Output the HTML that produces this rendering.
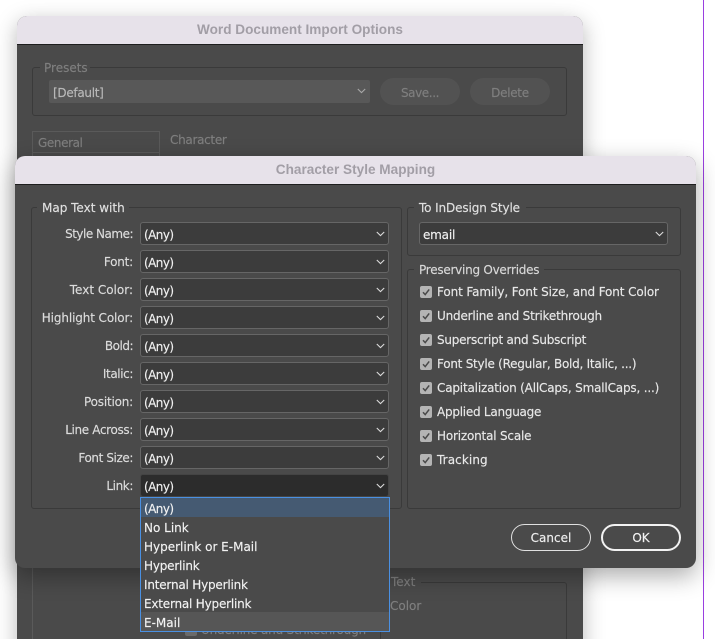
<!DOCTYPE html>
<html><head><meta charset="utf-8">
<style>
html,body{margin:0;padding:0;background:#fff}
#p{position:relative;width:715px;height:639px;overflow:hidden;background:#fff;font-family:"DejaVu Sans","Liberation Sans",sans-serif;font-size:12px;color:#e4e4e4}
#p div,#p span.a{position:absolute;box-sizing:border-box}
.t{white-space:nowrap;line-height:16px;height:16px;-webkit-text-stroke:.15px currentColor}
.dim{color:#7f7f7f}
.title{font-family:"Liberation Sans",sans-serif;font-weight:bold;font-size:13.6px;color:#a29ea6;text-align:center;line-height:28px}
.bar{background:#e7e2ea;border-bottom:1px solid #1e1e1e}
.fs{border:1px solid #3a3a3a;border-radius:3px}
.dd{background:#3c3c3c;border:1px solid #666;border-radius:3px;left:140px;width:249px;height:23px}
.lab{right:582px;text-align:right;color:#dcdcdc}
.v{left:144px;color:#f0f0f0;letter-spacing:-.55px}
.cb{left:420px;width:12px;height:12px;background:#b4b4b4;border-radius:2px}
.cbl{left:437px;color:#e8e8e8}
svg{position:absolute;overflow:visible}
.pi{left:144px;color:#f2f2f2}
</style></head><body>
<div id="p">
<!-- purple line -->
<div style="left:703px;top:0;width:1px;height:639px;background:#9a3fe0"></div>

<!-- back dialog -->
<div style="left:17px;top:16px;width:566px;height:640px;background:#4a4a4a;border-radius:10px 10px 0 0;box-shadow:0 6px 22px rgba(0,0,0,.28);overflow:hidden"></div>
<div class="bar" style="left:17px;top:16px;width:566px;height:29px;border-radius:10px 10px 0 0"></div>
<div class="title" style="left:17px;top:16px;width:566px">Word Document Import Options</div>
<div class="fs" style="left:32px;top:67px;width:535px;height:49px"></div>
<div style="left:40px;top:62px;width:50px;height:12px;background:#4a4a4a"></div>
<div class="t dim" style="left:44px;top:60px">Presets</div>
<div style="left:49px;top:80px;width:321px;height:23px;background:#585858;border-radius:2px"></div>
<div class="t" style="left:53px;top:85px;color:#b9b9b9;letter-spacing:-.3px">[Default]</div>
<svg style="left:357px;top:88px" width="9" height="6"><path d="M.8 1 4.5 4.6 8.2 1" fill="none" stroke="#a8a8a8" stroke-width="1.1"/></svg>
<div style="left:380px;top:78px;width:80px;height:27px;background:#525252;border-radius:14px"></div>
<div class="t dim" style="left:380px;top:85px;width:80px;text-align:center;letter-spacing:-.4px">Save...</div>
<div style="left:470px;top:78px;width:80px;height:27px;background:#525252;border-radius:14px"></div>
<div class="t dim" style="left:470px;top:85px;width:80px;text-align:center;letter-spacing:-.3px">Delete</div>
<div style="left:32px;top:131px;width:128px;height:40px;border:1px solid #5a5a5a"></div>
<div style="left:32px;top:152px;width:128px;height:1px;background:#5a5a5a"></div>
<div class="t dim" style="left:38px;top:135px;letter-spacing:-.4px">General</div>
<div class="t dim" style="left:170px;top:132px;letter-spacing:-.3px">Character</div>
<div style="left:32px;top:560px;width:1px;height:79px;background:#5a5a5a"></div>
<div class="fs" style="left:380px;top:582px;width:187px;height:70px"></div>
<div style="left:385px;top:576px;width:36px;height:12px;background:#4a4a4a"></div>
<div class="t dim" style="left:391px;top:574px">Text</div>
<div class="t dim" style="left:390px;top:598px">Color</div>

<!-- partially covered row beneath the popup -->
<div style="left:185px;top:624px;width:12px;height:12px;background:#6a6a6a;border-radius:2px"></div>
<div class="t dim" style="left:201px;top:622px;letter-spacing:-.18px">Underline and Strikethrough</div>

<!-- front dialog -->
<div style="left:15px;top:156px;width:681px;height:412px;background:#4a4a4a;border-radius:10px;box-shadow:0 8px 24px rgba(0,0,0,.33)"></div>
<div class="bar" style="left:15px;top:156px;width:681px;height:29px;border-radius:10px 10px 0 0"></div>
<div class="title" style="left:15px;top:156px;width:681px">Character Style Mapping</div>

<!-- Map text fieldset -->
<div class="fs" style="left:31px;top:207px;width:371px;height:302px"></div>
<div style="left:37px;top:202px;width:92px;height:12px;background:#4a4a4a"></div>
<div class="t" style="left:42px;top:200px;color:#e0e0e0">Map Text with</div>

<div class="t lab" style="top:226px;letter-spacing:-.5px">Style Name:</div><div class="dd" style="top:222px"></div><div class="t v" style="top:227px">(Any)</div>
<div class="t lab" style="top:254px;letter-spacing:-.2px">Font:</div><div class="dd" style="top:250px"></div><div class="t v" style="top:255px">(Any)</div>
<div class="t lab" style="top:282px">Text Color:</div><div class="dd" style="top:278px"></div><div class="t v" style="top:283px">(Any)</div>
<div class="t lab" style="top:310px;letter-spacing:-.12px">Highlight Color:</div><div class="dd" style="top:306px"></div><div class="t v" style="top:311px">(Any)</div>
<div class="t lab" style="top:338px;letter-spacing:-.5px">Bold:</div><div class="dd" style="top:334px"></div><div class="t v" style="top:339px">(Any)</div>
<div class="t lab" style="top:366px;letter-spacing:-.4px">Italic:</div><div class="dd" style="top:362px"></div><div class="t v" style="top:367px">(Any)</div>
<div class="t lab" style="top:394px;letter-spacing:-.2px">Position:</div><div class="dd" style="top:390px"></div><div class="t v" style="top:395px">(Any)</div>
<div class="t lab" style="top:422px;letter-spacing:-.35px">Line Across:</div><div class="dd" style="top:418px"></div><div class="t v" style="top:423px">(Any)</div>
<div class="t lab" style="top:450px;letter-spacing:-.4px">Font Size:</div><div class="dd" style="top:446px"></div><div class="t v" style="top:451px">(Any)</div>
<div class="t lab" style="top:478px;letter-spacing:-.4px">Link:</div><div class="dd" style="top:474px;background:#2c2c2c;border-color:#444"></div><div class="t v" style="top:479px">(Any)</div>

<svg style="left:376px;top:231px" width="9" height="6"><path d="M.8 1 4.5 4.6 8.2 1" fill="none" stroke="#dcdcdc" stroke-width="1.1"/></svg>
<svg style="left:376px;top:259px" width="9" height="6"><path d="M.8 1 4.5 4.6 8.2 1" fill="none" stroke="#dcdcdc" stroke-width="1.1"/></svg>
<svg style="left:376px;top:287px" width="9" height="6"><path d="M.8 1 4.5 4.6 8.2 1" fill="none" stroke="#dcdcdc" stroke-width="1.1"/></svg>
<svg style="left:376px;top:315px" width="9" height="6"><path d="M.8 1 4.5 4.6 8.2 1" fill="none" stroke="#dcdcdc" stroke-width="1.1"/></svg>
<svg style="left:376px;top:343px" width="9" height="6"><path d="M.8 1 4.5 4.6 8.2 1" fill="none" stroke="#dcdcdc" stroke-width="1.1"/></svg>
<svg style="left:376px;top:371px" width="9" height="6"><path d="M.8 1 4.5 4.6 8.2 1" fill="none" stroke="#dcdcdc" stroke-width="1.1"/></svg>
<svg style="left:376px;top:399px" width="9" height="6"><path d="M.8 1 4.5 4.6 8.2 1" fill="none" stroke="#dcdcdc" stroke-width="1.1"/></svg>
<svg style="left:376px;top:427px" width="9" height="6"><path d="M.8 1 4.5 4.6 8.2 1" fill="none" stroke="#dcdcdc" stroke-width="1.1"/></svg>
<svg style="left:376px;top:455px" width="9" height="6"><path d="M.8 1 4.5 4.6 8.2 1" fill="none" stroke="#dcdcdc" stroke-width="1.1"/></svg>
<svg style="left:376px;top:483px" width="9" height="6"><path d="M.8 1 4.5 4.6 8.2 1" fill="none" stroke="#dcdcdc" stroke-width="1.1"/></svg>

<!-- To InDesign style -->
<div class="fs" style="left:407px;top:207px;width:274px;height:49px"></div>
<div style="left:414px;top:202px;width:112px;height:12px;background:#4a4a4a"></div>
<div class="t" style="left:419px;top:200px;color:#e0e0e0;letter-spacing:-.12px">To InDesign Style</div>
<div class="dd" style="left:419px;top:222px"></div>
<div class="t" style="left:423px;top:227px;color:#f0f0f0;letter-spacing:-.2px">email</div>
<svg style="left:655px;top:231px" width="9" height="6"><path d="M.8 1 4.5 4.6 8.2 1" fill="none" stroke="#dcdcdc" stroke-width="1.1"/></svg>

<!-- Preserving overrides -->
<div class="fs" style="left:407px;top:269px;width:274px;height:240px"></div>
<div style="left:414px;top:264px;width:130px;height:12px;background:#4a4a4a"></div>
<div class="t" style="left:419px;top:262px;color:#d8d8d8;letter-spacing:-.25px">Preserving Overrides</div>

<div class="cb" style="top:286px"></div><svg style="left:420px;top:286px" width="12" height="12"><path d="M3 6.2 5.2 8.6 9.2 3.4" fill="none" stroke="#4a4a4a" stroke-width="1.5"/></svg><div class="t cbl" style="top:284px;letter-spacing:-.11px">Font Family, Font Size, and Font Color</div>
<div class="cb" style="top:310px"></div><svg style="left:420px;top:310px" width="12" height="12"><path d="M3 6.2 5.2 8.6 9.2 3.4" fill="none" stroke="#4a4a4a" stroke-width="1.5"/></svg><div class="t cbl" style="top:308px;letter-spacing:-.18px">Underline and Strikethrough</div>
<div class="cb" style="top:334px"></div><svg style="left:420px;top:334px" width="12" height="12"><path d="M3 6.2 5.2 8.6 9.2 3.4" fill="none" stroke="#4a4a4a" stroke-width="1.5"/></svg><div class="t cbl" style="top:332px;letter-spacing:-.24px">Superscript and Subscript</div>
<div class="cb" style="top:358px"></div><svg style="left:420px;top:358px" width="12" height="12"><path d="M3 6.2 5.2 8.6 9.2 3.4" fill="none" stroke="#4a4a4a" stroke-width="1.5"/></svg><div class="t cbl" style="top:356px;letter-spacing:-.25px">Font Style (Regular, Bold, Italic, ...)</div>
<div class="cb" style="top:382px"></div><svg style="left:420px;top:382px" width="12" height="12"><path d="M3 6.2 5.2 8.6 9.2 3.4" fill="none" stroke="#4a4a4a" stroke-width="1.5"/></svg><div class="t cbl" style="top:380px;letter-spacing:-.18px">Capitalization (AllCaps, SmallCaps, ...)</div>
<div class="cb" style="top:406px"></div><svg style="left:420px;top:406px" width="12" height="12"><path d="M3 6.2 5.2 8.6 9.2 3.4" fill="none" stroke="#4a4a4a" stroke-width="1.5"/></svg><div class="t cbl" style="top:404px;letter-spacing:-.25px">Applied Language</div>
<div class="cb" style="top:430px"></div><svg style="left:420px;top:430px" width="12" height="12"><path d="M3 6.2 5.2 8.6 9.2 3.4" fill="none" stroke="#4a4a4a" stroke-width="1.5"/></svg><div class="t cbl" style="top:428px;letter-spacing:-.19px">Horizontal Scale</div>
<div class="cb" style="top:454px"></div><svg style="left:420px;top:454px" width="12" height="12"><path d="M3 6.2 5.2 8.6 9.2 3.4" fill="none" stroke="#4a4a4a" stroke-width="1.5"/></svg><div class="t cbl" style="top:452px;letter-spacing:.1px">Tracking</div>

<!-- buttons -->
<div style="left:511px;top:524px;width:80px;height:27px;border:1px solid #e0e0e0;border-radius:14px"></div>
<div class="t" style="left:511px;top:530px;width:80px;text-align:center;color:#eee">Cancel</div>
<div style="left:601px;top:524px;width:80px;height:27px;border:2px solid #f2f2f2;border-radius:14px"></div>
<div class="t" style="left:601px;top:530px;width:80px;text-align:center;color:#f2f2f2">OK</div>

<!-- popup -->
<div style="left:140px;top:497px;width:250px;height:135px;background:#4a4a4a;border:1px solid #4a90e2"></div>
<div style="left:141px;top:498px;width:248px;height:19px;background:#455a72"></div>
<div style="left:141px;top:612px;width:248px;height:19px;background:#565656"></div>
<div class="t pi" style="top:501px;letter-spacing:-.55px">(Any)</div>
<div class="t pi" style="top:520px">No Link</div>
<div class="t pi" style="top:539px">Hyperlink or E-Mail</div>
<div class="t pi" style="top:558px;letter-spacing:-.2px">Hyperlink</div>
<div class="t pi" style="top:577px;letter-spacing:-.2px">Internal Hyperlink</div>
<div class="t pi" style="top:596px;letter-spacing:-.2px">External Hyperlink</div>
<div class="t pi" style="top:615px">E-Mail</div>
</div>
</body></html>
